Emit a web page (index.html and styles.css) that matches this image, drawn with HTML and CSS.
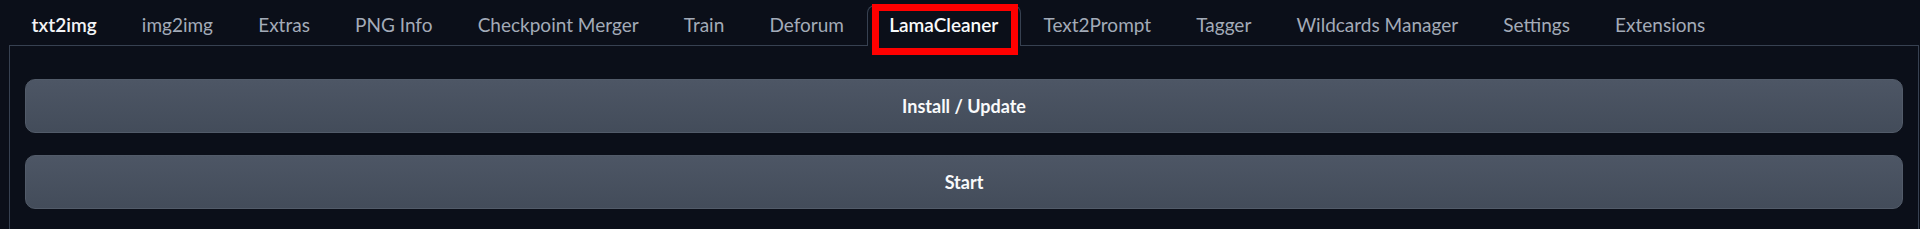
FILE: index.html
```html
<!DOCTYPE html>
<html lang="en">
<head>
    <meta charset="UTF-8">
    <title>LamaCleaner</title>
    <link rel="stylesheet" href="styles.css">
</head>
<body>
    <div class="app">
        <div class="tab-nav">
            <button class="tab hot">txt2img</button>
            <button class="tab">img2img</button>
            <button class="tab">Extras</button>
            <button class="tab">PNG Info</button>
            <button class="tab">Checkpoint Merger</button>
            <button class="tab">Train</button>
            <button class="tab">Deforum</button>
            <button class="tab selected">LamaCleaner<span class="mark"></span></button>
            <button class="tab">Text2Prompt</button>
            <button class="tab">Tagger</button>
            <button class="tab">Wildcards Manager</button>
            <button class="tab">Settings</button>
            <button class="tab">Extensions</button>
        </div>
        <div class="panel">
            <button class="btn">Install / Update</button>
            <button class="btn">Start</button>
        </div>
    </div>
</body>
</html>
```

FILE: styles.css
```css
body { margin: 0; background-color: #0b0f19; font-family: Lato, "Open Sans", sans-serif; overflow: hidden; }
.app { padding: 5px 1px 0 9px; }
.tab-nav { display: flex; position: relative; z-index: 1; }
.tab { position: relative; height: 41px; margin-bottom: -1px; padding: 0 21.6px 3px; border: 1px solid transparent; border-bottom: none; border-radius: 8px 8px 0 0; background: none; color: #a3abb8; font-family: inherit; font-size: 19px; cursor: pointer; }
.tab.hot { color: #f3f4f6; font-weight: 600; }
.tab.selected { border-color: #374151; background-color: #0b0f19; color: #f9fafb; font-weight: 600; }
.mark { position: absolute; left: 4px; right: 2px; top: -2px; bottom: -9px; border: 7px solid #ff0000; }
.panel { display: flex; flex-direction: column; gap: 22px; padding: 33px 15px 40px 15px; border: 1px solid #374151; }
.btn { height: 54px; border: 1px solid #525b69; border-radius: 10px; background: linear-gradient(to bottom, #4d5665, #434c5a); color: #f9fafb; font-family: inherit; font-size: 18px; font-weight: 700; cursor: pointer; }
```
